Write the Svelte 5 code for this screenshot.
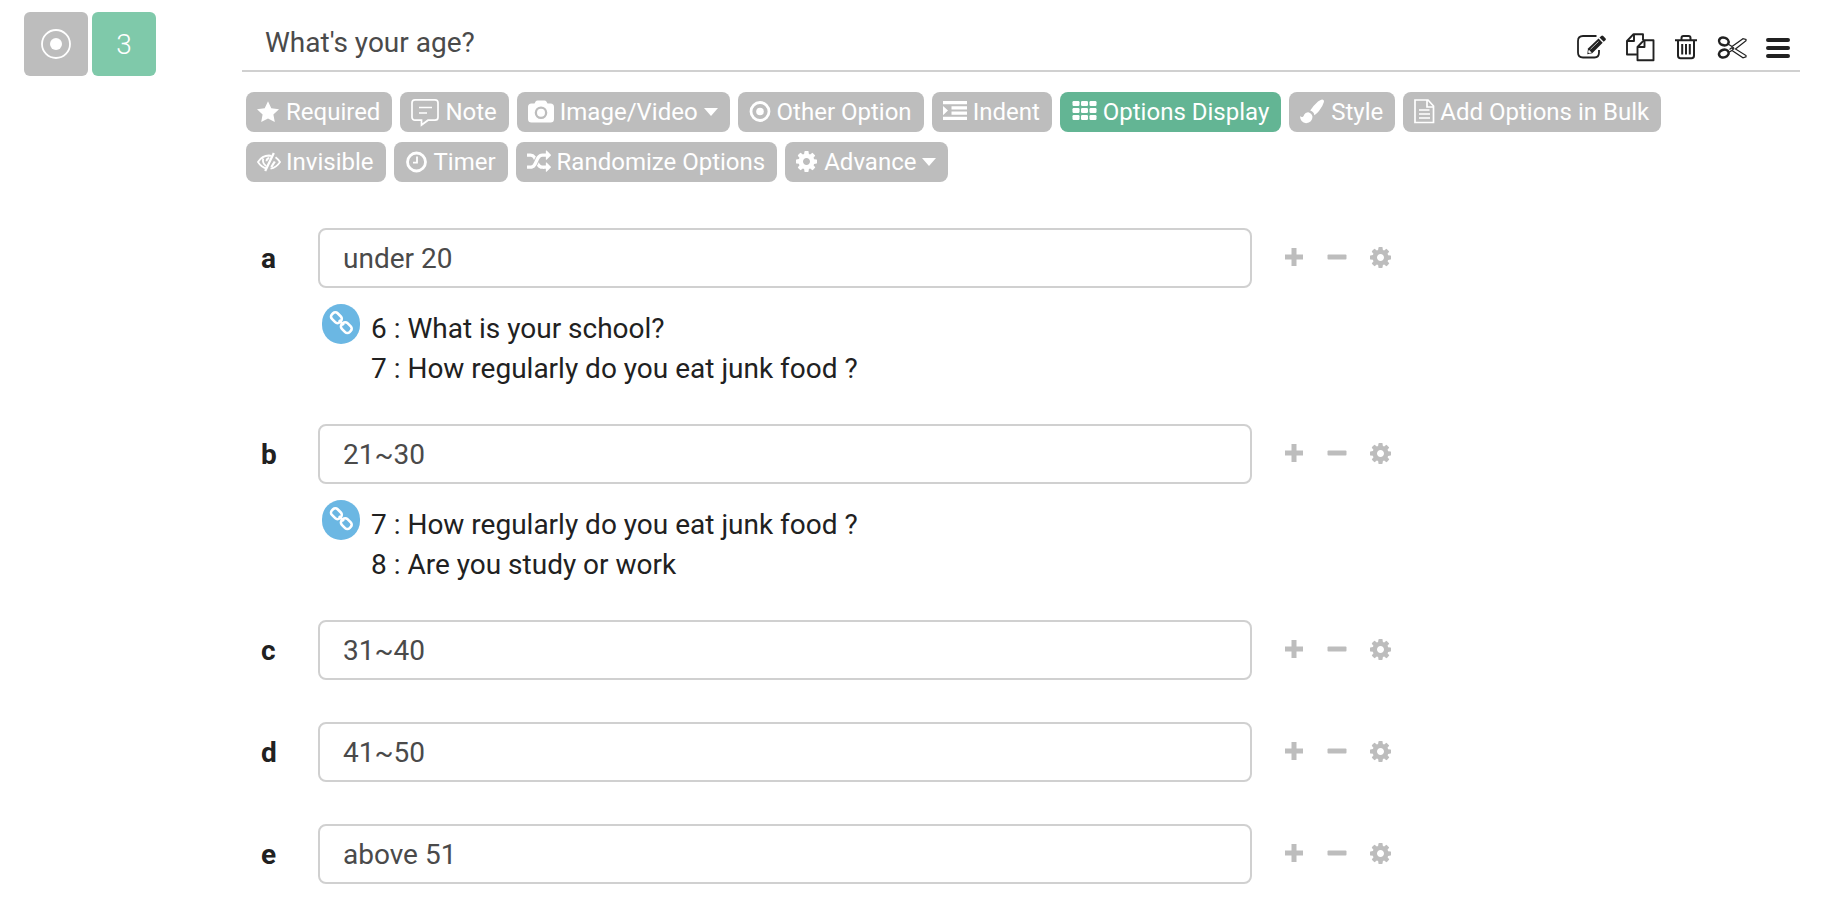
<script>
  const gear =
    'M1152 896q0-106-75-181t-181-75-181 75-75 181 75 181 181 75 181-75 75-181zm512-109v222q0 12-8 23t-20 13l-185 28q-19 54-39 91 35 50 107 138 10 12 10 25t-9 23q-27 37-99 108t-94 71q-12 0-26-9l-138-108q-44 23-91 38-16 136-29 186-7 28-36 28h-222q-14 0-24.500-8.500t-11.500-21.500l-28-184q-49-16-90-37l-141 107q-10 9-25 9-14 0-25-11-126-114-165-168-7-10-7-23 0-12 8-23 15-21 51-66.500t54-70.500q-27-50-41-99l-183-27q-13-2-21-12.500t-8-23.500v-222q0-12 8-23t19-13l186-28q14-46 39-92-40-57-107-138-10-12-10-24 0-10 9-23 26-36 98.500-107.500t94.500-71.500q13 0 26 10l138 107q44-23 91-38 16-136 29-186 7-28 36-28h222q14 0 24.500 8.500t11.500 21.500l28 184q49 16 90 37l142-107q9-9 24-9 13 0 25 10 129 119 165 170 7 8 7 22 0 12-8 23-15 21-51 66.500t-54 70.500q26 50 41 98l183 28q13 2 21 12.500t8 23.500z';

  const tools = [
    { label: 'Required', icon: 'star', w: 23 },
    { label: 'Note', icon: 'note', w: 28 },
    { label: 'Image/Video', icon: 'camera', w: 26, menu: true },
    { label: 'Other Option', icon: 'target', w: 22 },
    { label: 'Indent', icon: 'indent', w: 24 },
    { label: 'Options Display', icon: 'grid', w: 26, active: true },
    { label: 'Style', icon: 'brush', w: 25 },
    { label: 'Add Options in Bulk', icon: 'doc', w: 20 },
    { label: 'Invisible', icon: 'eye', w: 23 },
    { label: 'Timer', icon: 'clock', w: 23 },
    { label: 'Randomize Options', icon: 'random', w: 24 },
    { label: 'Advance', icon: 'gear', w: 22, menu: true }
  ];

  let question = $state("What's your age?");
  let options = $state([
    { key: 'a', text: 'under 20', links: ['6 : What is your school?', '7 : How regularly do you eat junk food ?'] },
    { key: 'b', text: '21~30', links: ['7 : How regularly do you eat junk food ?', '8 : Are you study or work'] },
    { key: 'c', text: '31~40', links: [] },
    { key: 'd', text: '41~50', links: [] },
    { key: 'e', text: 'above 51', links: [] }
  ]);
</script>

{#snippet glyph(name, w)}
  <svg class="glyph" width={w} height="28" viewBox="0 0 {w} 28" aria-hidden="true">
    {#if name === 'star'}
      <path d="M11 3.200l3.300 7 7.700 1-5.600 5.300 1.400 7.600L11 20.400l-6.800 3.700 1.400-7.600L0 11.200l7.700-1z" fill="currentColor" />
    {:else if name === 'note'}
      <path d="M4 1.800h20a3 3 0 0 1 3 3v14.400a3 3 0 0 1-3 3h-7L10.500 27v-4.800H4a3 3 0 0 1-3-3V4.800a3 3 0 0 1 3-3zM8 9.500h13M8 15h8" fill="none" stroke="currentColor" stroke-width="1.700" />
    {:else if name === 'camera'}
      <path fill-rule="evenodd" fill="currentColor" d="M3.500 5.500h3L7.600 3.500Q8.300 2.500 9.500 2.500h7q1.200 0 1.900 1l1.100 2h3a3.500 3.500 0 0 1 3.500 3.500v12a3.500 3.500 0 0 1-3.500 3.500h-19A3.500 3.500 0 0 1 0 21V9a3.500 3.500 0 0 1 3.500-3.500zM13 8.500a6.300 6.300 0 1 0 0 12.600a6.300 6.300 0 1 0 0-12.600zM13 10.800a4 4 0 1 1 0 8a4 4 0 1 1 0-8z" />
    {:else if name === 'target'}
      <circle cx="11" cy="13.500" r="9" fill="none" stroke="currentColor" stroke-width="2.800" />
      <circle cx="11" cy="13.500" r="3.800" fill="currentColor" />
    {:else if name === 'indent'}
      <path fill="currentColor" d="M0 3h24v3.200H0zM8.500 8.200H24v3.200H8.500zM8.500 13.500H24v3.200H8.500zM0 18.700h24v3.200H0zM0 8l5 4.600-5 4.600z" />
    {:else if name === 'grid'}
      {#each [1.5, 10, 18.5] as x}
        {#each [3, 10, 17] as y}
          <rect {x} {y} width="7" height="5" rx="1.200" fill="currentColor" />
        {/each}
      {/each}
    {:else if name === 'brush'}
      <path fill="currentColor" d="M22 1.400q2.400 0 1.900 2.600-1.100 4.300-4.900 9-2 2.600-4.600 4.200-.6-3.200-4.200-4.600Q12.600 8.500 18 3.600q2.300-2 4-2.200zM8.300 14.200q3.800 1 4.200 4.600-.2 6-6.400 6.400Q.4 24.600 0 18.200q1.600 1.200 2.900.6.900-.6 1.200-2 1.300-2.800 4.200-2.600z" />
    {:else if name === 'doc'}
      <path fill="none" stroke="currentColor" stroke-width="1.700" d="M1 2h13l5.500 6v16.500H1zM13 2v7h6.500M5 12h10.500M5 16h11M5 20h11" />
    {:else if name === 'eye'}
      <path fill="none" stroke="currentColor" stroke-width="1.800" d="M9.500 20.500Q4.500 19.500 1 14Q5 7.500 12 7.500l2.500.3M18.500 9.200Q21 11 23 14q-3.500 5.500-9.500 6.600M6.200 10.500a7 7 0 0 0 3 7.500M12.300 10q-2.700.5-2.800 3.200" />
      <path stroke="currentColor" stroke-width="2.300" d="M16.800 5L8.200 23M17.800 13.500l-3.500 5.500" />
    {:else if name === 'clock'}
      <circle cx="11.500" cy="14" r="9" fill="none" stroke="currentColor" stroke-width="2.800" />
      <path d="M12 8.500v6.200H8" fill="none" stroke="currentColor" stroke-width="1.800" />
    {:else if name === 'random'}
      <svg width="24" height="24" y="2" viewBox="0 0 1792 1792">
        <path fill="currentColor" d="M666 481q-60 92-137 273-22-45-37-72.500t-40.500-63.500-51-56.500-63-35-81.500-14.500h-224q-14 0-23-9t-9-23v-192q0-14 9-23t23-9h224q250 0 410 225zm1126 799q0 14-9 23l-320 320q-9 9-23 9-13 0-22.500-9.500t-9.500-22.500v-192q-32 0-85 .5t-81 1-73-1-71-5-64-10.500-63-18.500-58-28.500-59-40-55-53.500-56-69.500q59-93 136-273 22 45 37 72.500t40.500 63.500 51 56.500 63 35 81.500 14.500h256v-192q0-14 9-23t23-9q12 0 24 10l319 319q9 9 9 23zm0-896q0 14-9 23l-320 320q-9 9-23 9-13 0-22.500-9.500t-9.500-22.500v-192h-256q-48 0-87 15t-69 45-51 61.500-45 77.500q-32 62-78 171-29 66-49.500 111t-54 105-64 100-74 83-90 68.500-106.500 42-128 16.500h-224q-14 0-23-9t-9-23v-192q0-14 9-23t23-9h224q48 0 87-15t69-45 51-61.500 45-77.500q32-62 78-171 29-66 49.500-111t54-105 64-100 74-83 90-68.500 106.500-42 128-16.500h256v-192q0-14 9-23t23-9q12 0 24 10l319 319q9 9 9 23z" />
      </svg>
    {:else if name === 'gear'}
      <svg width="21" height="21" y="3" viewBox="128 128 1536 1536"><path fill="currentColor" d={gear} /></svg>
    {/if}
  </svg>
{/snippet}

<main>
  <div class="badges">
    <button class="badge type" aria-label="Single choice">
      <svg width="30" height="30" viewBox="0 0 30 30" aria-hidden="true">
        <circle cx="15" cy="15" r="14" fill="none" stroke="currentColor" stroke-width="1.800" />
        <circle cx="15" cy="15" r="6" fill="currentColor" />
      </svg>
    </button>
    <span class="badge number">3</span>
  </div>

  <section class="editor">
    <header>
      <input class="question" aria-label="Question" bind:value={question} />
      <div class="actions">
        <button aria-label="Edit">
          <svg width="30" height="30" viewBox="0 0 30 30" aria-hidden="true">
            <path d="M20.500 4H7Q2 4 2 9v11.500q0 5 5 5h11.500q4.500 0 4.500-5V18" fill="none" stroke="currentColor" stroke-width="1.800" />
            <path d="M12 16.500L22.500 6.500l4.200 4.200L16.200 21.200l-4.900 1z" fill="currentColor" />
            <path d="M23.500 5.500l1.700-1.500q1-1 2 0L29.400 6.200q1 1 0 2L27.700 9.700z" fill="currentColor" />
            <path d="M14.500 17.200l8-7.700" stroke="#fff" stroke-width=".7" />
            <path d="M13 18.200l2.200 2.300-2 .5-.8-.8z" fill="#fff" stroke="#fff" stroke-width=".6" />
          </svg>
        </button>
        <button aria-label="Copy">
          <svg width="30" height="30" viewBox="0 0 30 30" aria-hidden="true">
            <path d="M18 8V2.200H8.500L2 9v13.500h9.500M9 2.200V9H2M19 8.200h9.500v20h-16V15zM19.500 8.200V15h-7" fill="none" stroke="currentColor" stroke-width="1.900" stroke-linejoin="round" />
          </svg>
        </button>
        <button aria-label="Delete">
          <svg width="24" height="30" viewBox="0 0 24 30" aria-hidden="true">
            <path d="M1 8.200h22M7.500 8V6q0-2 2-2h5q2 0 2 2v2M4 8v15.500q0 2.800 2.500 2.800h11q2.500 0 2.500-2.800V8M8.200 12v10.500M12 12v10.500M15.800 12v10.500" fill="none" stroke="currentColor" stroke-width="2" />
          </svg>
        </button>
        <button aria-label="Cut">
          <svg width="30" height="30" viewBox="0 0 30 30" aria-hidden="true">
            <g fill="none" stroke="currentColor">
              <ellipse cx="7" cy="9.500" rx="4.900" ry="3.800" transform="rotate(20 7 9)" stroke-width="2.500" />
              <ellipse cx="7" cy="21.500" rx="4.900" ry="3.800" transform="rotate(-20 7 22)" stroke-width="2.500" />
              <path d="M11 12l4 2.500L26 6.700l3 .8v1.300L18.500 17 29 23.500v1.300l-3 1L15 18.500 11.500 20.500M12.500 17.500l2.500-2" stroke-width="1.200" />
              <circle cx="16" cy="16.500" r=".8" stroke-width="1.200" />
            </g>
          </svg>
        </button>
        <button aria-label="Menu">
          <svg width="24" height="30" viewBox="0 0 24 30" aria-hidden="true">
            <path d="M2 8h20M2 16h20M2 24h20" stroke="currentColor" stroke-width="4" stroke-linecap="round" />
          </svg>
        </button>
      </div>
    </header>

    <div class="tools">
      {#each tools as t}
        <button class="tool" class:active={t.active}>
          {@render glyph(t.icon, t.w)}
          <span>{t.label}</span>
          {#if t.menu}<i class="caret"></i>{/if}
        </button>
      {/each}
    </div>

    <div class="options">
      {#each options as o}
        <div class="option">
          <label for="option-{o.key}">{o.key}</label>
          <div class="field">
            <input id="option-{o.key}" bind:value={o.text} />
            {#if o.links.length}
              <div class="links">
                <button class="link" aria-label="Linked questions">
                  <svg width="26" height="26" viewBox="0 0 26 26" aria-hidden="true">
                    <g transform="rotate(45 13 13)" fill="none" stroke="currentColor" stroke-width="2.600">
                      <rect x="0.500" y="8.500" width="11" height="8" rx="3.200" />
                      <rect x="14.500" y="8.500" width="11" height="8" rx="3.200" />
                      <path d="M9.500 12.500h7" />
                    </g>
                  </svg>
                </button>
                <ul>
                  {#each o.links as l}<li>{l}</li>{/each}
                </ul>
              </div>
            {/if}
          </div>
          <div class="controls">
            <button aria-label="Add option">
              <svg width="20" height="20" viewBox="0 0 20 20" aria-hidden="true"><path d="M10 1v18M1 10h18" stroke="currentColor" stroke-width="5" /></svg>
            </button>
            <button aria-label="Remove option">
              <svg width="20" height="20" viewBox="0 0 20 20" aria-hidden="true"><rect y="7.500" x="0.500" width="19" height="5" rx="1" fill="currentColor" /></svg>
            </button>
            <button aria-label="Option settings">
              <svg width="21" height="21" viewBox="128 128 1536 1536" aria-hidden="true"><path fill="currentColor" d={gear} /></svg>
            </button>
          </div>
        </div>
      {/each}
    </div>
  </section>
</main>

<style>
  :global(body) {
    background: #fff;
  }
  main {
    display: flex;
    gap: 86px;
    padding: 12px 28px 14px 24px;
    font-family: Roboto, sans-serif;
    font-size: 28px;
    color: #212121;
  }
  button {
    display: flex;
    align-items: center;
    justify-content: center;
    padding: 0;
    border: 0;
    background: none;
    color: inherit;
    font: inherit;
    cursor: pointer;
  }
  svg {
    display: block;
    flex: none;
  }
  .glyph {
    overflow: visible;
  }
  input {
    box-sizing: border-box;
    font: inherit;
    color: #4a4a4a;
    outline: 0;
    background: none;
  }
  .badges {
    display: flex;
    gap: 4px;
    flex: none;
  }
  .badge {
    display: flex;
    align-items: center;
    justify-content: center;
    width: 64px;
    height: 64px;
    border-radius: 6px;
    color: #fff;
  }
  .type {
    background: #bdbdbd;
  }
  .number {
    background: #7fc9aa;
    font-weight: 300;
  }
  .editor {
    flex: 1;
    min-width: 0;
  }
  header {
    display: flex;
    align-items: center;
    height: 58px;
    border-bottom: 2px solid #d0d0d0;
  }
  .question {
    flex: 1;
    min-width: 0;
    height: 58px;
    padding: 2px 23px 0;
    border: 0;
  }
  .actions {
    display: flex;
    align-items: center;
    gap: 19px;
    padding: 12px 10px 0 0;
  }
  .tools {
    display: flex;
    flex-wrap: wrap;
    gap: 10px 8px;
    max-width: 1440px;
    padding: 20px 4px 0;
  }
  .tool {
    height: 40px;
    gap: 6px;
    padding: 0 12px 0 11px;
    border-radius: 8px;
    background: #bdbdbd;
    color: #fff;
    font-size: 24px;
    white-space: nowrap;
  }
  .active {
    background: #63b594;
  }
  .caret {
    border: 7px solid transparent;
    border-top: 8px solid currentColor;
    border-bottom: 0;
  }
  .options {
    display: flex;
    flex-direction: column;
    gap: 42px;
    padding-top: 46px;
  }
  .option {
    display: flex;
    align-items: flex-start;
  }
  label {
    width: 57px;
    padding-left: 19px;
    line-height: 62px;
    height: 60px;
    font-weight: 700;
  }
  .field {
    flex: 1;
    max-width: 934px;
  }
  .field input {
    display: block;
    width: 100%;
    height: 60px;
    padding: 0 23px;
    border: 2px solid #d0d0d0;
    border-radius: 8px;
  }
  .links {
    display: flex;
    gap: 11px;
    padding: 16px 4px 0;
  }
  .link {
    width: 38px;
    height: 40px;
    padding-bottom: 2px;
    border-radius: 20px;
    background: #6bb7e3;
    color: #fff;
  }
  ul {
    margin: 0 0 -7px;
    padding: 5px 0 0;
    list-style: none;
    line-height: 40px;
  }
  .controls {
    display: flex;
    align-items: center;
    gap: 23px;
    height: 58px;
    padding-left: 32px;
    color: #bdbdbd;
  }
</style>
